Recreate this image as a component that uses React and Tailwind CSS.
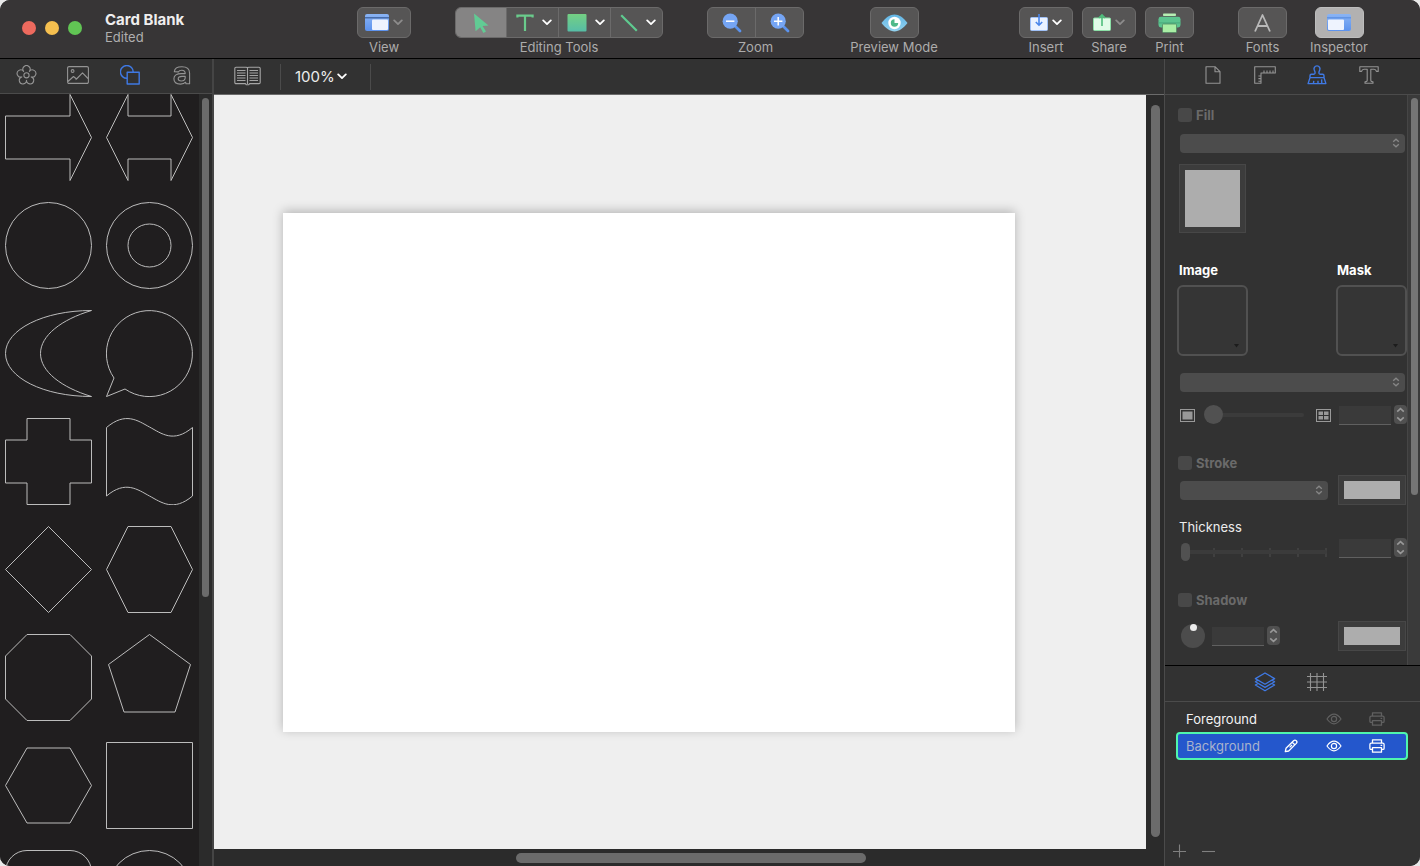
import { useState } from 'react';
import clsx from 'clsx';

const SHAPES = [
  { name: 'Arrow', d: 'M0 21.5H64.5V0L86 43 64.5 86V64.5H0Z' },
  { name: 'Double arrow', d: 'M0 43 21.5 0V21.5H64.5V0L86 43 64.5 86V64.5H21.5V86Z' },
  { name: 'Circle', d: 'M0 43a43 43 0 1 1 86 0a43 43 0 1 1-86 0Z' },
  { name: 'Ring', d: 'M0 43a43 43 0 1 1 86 0a43 43 0 1 1-86 0ZM21.5 43a21.5 21.5 0 1 1 43 0a21.5 21.5 0 1 1-43 0Z' },
  { name: 'Moon', d: 'M86 0C38 0 0 19 0 43S38 86 86 86C56 77 35 61 35 43S56 9 86 0Z' },
  { name: 'Speech bubble', d: 'M7.5 67.5A43 43 0 1 1 18.5 78.5L0 86Z' },
  { name: 'Cross', d: 'M21.5 0H64.5V21.5H86V64.5H64.5V86H21.5V64.5H0V21.5H21.5Z' },
  { name: 'Flag', d: 'M0 9C19-7 31 2 43 8.5S67 25 86 9V77.5C67 93.5 55 84 43 77.5S19 61.5 0 77.5Z' },
  { name: 'Diamond', d: 'M43 0 86 43 43 86 0 43Z' },
  { name: 'Tall hexagon', d: 'M21.5 0H64.5L86 43 64.5 86H21.5L0 43Z' },
  { name: 'Octagon', d: 'M21.5 0H64.5L86 21.5V64.5L64.5 86H21.5L0 64.5V21.5Z' },
  { name: 'Pentagon', d: 'M43 0 84 30 68.5 77.5H17.5L2 30Z' },
  { name: 'Hexagon', d: 'M21.5 5.5H64.5L86 43 64.5 80.5H21.5L0 43Z' },
  { name: 'Square', d: 'M0 0H86V86H0Z' },
  { name: 'Rounded square', d: 'M21.5 0H64.5A21.5 21.5 0 0 1 86 21.5V64.5A21.5 21.5 0 0 1 64.5 86H21.5A21.5 21.5 0 0 1 0 64.5V21.5A21.5 21.5 0 0 1 21.5 0Z' },
  { name: 'Oval', d: 'M0 43a43 43 0 1 1 86 0a43 43 0 1 1-86 0Z' },
];

/* ---------- small glyphs ---------- */

function Chevron({ className = 'text-white' }) {
  return (
    <svg width="10" height="7" viewBox="0 0 10 7" className={className} fill="none" stroke="currentColor" strokeWidth="1.8" strokeLinecap="round" strokeLinejoin="round">
      <path d="M1.2 1.4 5 5.1 8.8 1.4" />
    </svg>
  );
}

function WindowIcon({ flip }) {
  return (
    <svg width="24" height="17" viewBox="0 0 24 17">
      <defs>
        <linearGradient id="win" x1="0" y1="0" x2="0" y2="1">
          <stop offset="0" stopColor="#8ab4f4" />
          <stop offset="1" stopColor="#5c92ee" />
        </linearGradient>
      </defs>
      <rect width="24" height="17" rx="2" fill="url(#win)" />
      <rect y="3.2" width="24" height="1.2" fill={flip ? '#5b8fe0' : '#3a5c96'} />
      <rect x={flip ? 1 : 7} y="5.6" width="16" height="10.4" rx="1" fill="#eef3fe" />
    </svg>
  );
}

function ArrowCursorIcon() {
  return (
    <svg width="18" height="20" viewBox="0 0 18 20">
      <path d="M2 0.5 16.5 12.5 10.6 13 14 18.6 11.4 20 8.2 14.2 3.6 18.2Z" fill="#61cb94" />
    </svg>
  );
}

function TextToolIcon() {
  return (
    <svg width="18" height="18" viewBox="0 0 18 18" fill="none" stroke="#6acb8c" strokeWidth="2.2">
      <path d="M1.4 3.4V1.6H16.6V3.4M9 1.6V17" />
    </svg>
  );
}

function RectToolIcon() {
  return (
    <svg width="20" height="18" viewBox="0 0 20 18">
      <defs>
        <linearGradient id="rect" x1="0" y1="0" x2="0" y2="1">
          <stop offset="0" stopColor="#74d083" />
          <stop offset="1" stopColor="#56bda6" />
        </linearGradient>
      </defs>
      <rect x="0.5" width="19" height="17.5" rx="1" fill="url(#rect)" />
    </svg>
  );
}

function LineToolIcon() {
  return (
    <svg width="18" height="18" viewBox="0 0 18 18" fill="none" stroke="#5fcb90" strokeWidth="2.2">
      <path d="M1.2 1.2 16.8 16.8" />
    </svg>
  );
}

function ZoomIcon({ plus }) {
  return (
    <svg width="20" height="20" viewBox="0 0 20 20" fill="none">
      <path d="M13 13 18 18" stroke="#5b93ee" strokeWidth="2.8" strokeLinecap="round" />
      <circle cx="8.2" cy="8.2" r="7.6" fill="#75a5f4" />
      <path d={plus ? 'M4 8.2h8.4M8.2 4v8.4' : 'M4 8.2h8.4'} stroke="#fff" strokeWidth="1.5" />
    </svg>
  );
}

function PreviewIcon() {
  return (
    <svg width="27" height="18" viewBox="0 0 27 18">
      <defs>
        <linearGradient id="eye" x1="0" y1="0" x2="0" y2="1">
          <stop offset="0" stopColor="#62b6e6" />
          <stop offset="1" stopColor="#94d3f0" />
        </linearGradient>
      </defs>
      <path d="M0.5 9C5 3.4 9 0.6 13.5 0.6S22 3.4 26.5 9C22 14.6 18 17.4 13.5 17.4S5 14.6 0.5 9Z" fill="url(#eye)" />
      <circle cx="13.5" cy="9" r="6.2" fill="#fff" />
      <path d="M13.5 5.3V9H17.2A3.7 3.7 0 1 1 13.5 5.3Z" fill="#4fb98a" />
    </svg>
  );
}

function InsertIcon() {
  return (
    <svg width="18" height="17" viewBox="0 0 18 17" fill="none">
      <rect x="0.5" y="3.5" width="17" height="13" rx="1" fill="#eaf2ff" stroke="#9fc0f7" />
      <path d="M9 0V11M5.8 8 9 11.2 12.2 8" stroke="#4a86ea" strokeWidth="1.6" />
    </svg>
  );
}

function ShareIcon() {
  return (
    <svg width="18" height="17" viewBox="0 0 18 17" fill="none">
      <rect x="0.5" y="4" width="17" height="12.5" rx="1" fill="#e0fbe8" stroke="#8be0a6" />
      <path d="M9 1V12M5.8 4 9 0.9 12.2 4" stroke="#4fbd7c" strokeWidth="1.6" />
    </svg>
  );
}

function PrintIcon() {
  return (
    <svg width="23" height="20" viewBox="0 0 23 20">
      <rect x="5" y="0.5" width="13" height="2.6" rx="0.8" fill="#b6efb4" />
      <rect x="0.5" y="3.8" width="22" height="10.6" rx="2.4" fill="#5cc48f" />
      <rect x="0.5" y="9.4" width="22" height="1" fill="#4aa87c" />
      <rect x="4.5" y="11" width="14" height="8.6" rx="0.8" fill="#a9eea5" stroke="#4f8a63" strokeWidth="0.8" />
    </svg>
  );
}

function FontsIcon() {
  return (
    <svg width="17" height="18" viewBox="0 0 17 18" fill="none" stroke="#b9b9b9" strokeWidth="1.8">
      <path d="M1 17.5 8.5 1 16 17.5M3.6 12H13.4" strokeLinejoin="round" />
    </svg>
  );
}

function Line({ w = 20, h = 20, d, width = 1.1, children }) {
  return (
    <svg width={w} height={h} viewBox={`0 0 ${w} ${h}`} fill="none" stroke="currentColor" strokeWidth={width} strokeLinejoin="round">
      {d && <path d={d} />}
      {children}
    </svg>
  );
}

const FlowerIcon = () => (
  <Line w={21} h={20}>
    <circle cx="10.5" cy="10.3" r="2.6" />
    <path d="M7.6 6.3A3.6 3.6 0 1 1 13.4 6.3A3.6 3.6 0 1 1 15.2 11.9A3.6 3.6 0 1 1 10.5 15.3A3.6 3.6 0 1 1 5.8 11.9A3.6 3.6 0 1 1 7.6 6.3Z" />
  </Line>
);
const PictureIcon = () => (
  <Line w={22} h={18} d="M2 0.6H20A1.4 1.4 0 0 1 21.4 2V16A1.4 1.4 0 0 1 20 17.4H2A1.4 1.4 0 0 1 0.6 16V2A1.4 1.4 0 0 1 2 0.6ZM1 15.5 6.5 10.5 9.5 13 15.5 6.8 21 12.5M8.5 13.8 9.8 12.6">
    <circle cx="5.6" cy="5" r="1.4" />
  </Line>
);
const ShapesIcon = () => (
  <Line w={20} h={20} width={1.4} d="M7.2 7.2H19.2V19H7.2ZM7.2 13.3A6.4 6.4 0 1 1 13.2 7.2" />
);
const LetterIcon = () => (
  <Line w={18} h={19} d="M1.3 5.7C1.6 2.3 4.6 0.8 8.9 0.8C14 0.8 16.6 3 16.6 7.3V17.8H13L12.6 16.2C11.4 17.5 9.8 18.1 7.6 18.1C3.4 18.1 0.9 16.2 0.9 12.8C0.9 9.3 3.6 7.6 8.6 7.6H12.2C12.2 5.3 11.1 4.3 8.8 4.3C7 4.3 5.9 4.8 5.4 5.9ZM12.2 10.4H9C6.5 10.4 5.2 11.2 5.2 12.8C5.2 14.2 6.3 15 8.2 15C10.6 15 12.2 13.6 12.2 11.6Z" />
);
const BookIcon = () => (
  <Line w={27} h={20} d="M13.5 2V18M2 1.2H12Q13.5 1.2 13.5 2Q13.5 1.2 15 1.2H25A1.2 1.2 0 0 1 26.2 2.4V16.4A1.2 1.2 0 0 1 25 17.6H15.6L14.8 18.8H12.2L11.4 17.6H2A1.2 1.2 0 0 1 0.8 16.4V2.4A1.2 1.2 0 0 1 2 1.2ZM3 4.5H11.5M3 7H11.5M3 9.5H11.5M3 12H11.5M3 14.5H11.5M15.5 4.5H24M15.5 7H24M15.5 9.5H24M15.5 12H24M15.5 14.5H24" />
);
const PageIcon = () => <Line w={16} h={18} d="M1 0.7H10L15 5.7V17.3H1ZM10 0.7V5.7H15" />;
const RulerIcon = () => (
  <Line w={22} h={18} d="M0.7 0.7H21.3V7H7V17.3H0.7ZM10 7V4.4M13 7V4.4M16 7V4.4M19 7V4.4M7 10H4.4M7 12.6H4.4M7 15.2H4.4" />
);
const BrushIcon = () => (
  <Line w={20} h={20} width={1.4} d="M8 8.4C8.4 7.2 8 6.4 7.4 5.4A3 3 0 1 1 12.6 5.4C12 6.4 11.6 7.2 12 8.4Q12.2 9.2 13.4 9.2H15.6Q17 9.2 17 10.8V12.6H3V10.8Q3 9.2 4.4 9.2H6.6Q7.8 9.2 8 8.4ZM3 12.6 1.1 18.6H18.9L17 12.6M6.4 18.6 6.8 15.8M11 18.6V15.8M14.8 18.6 14.6 14.4" />
);
const BigTIcon = () => (
  <Line w={20} h={18} d="M0.8 0.7H19.2V5.4H17.4Q17 3.2 15 3.2H11.8V14.2Q11.8 15.8 14 15.8V17.3H6V15.8Q8.2 15.8 8.2 14.2V3.2H5Q3 3.2 2.6 5.4H0.8Z" />
);
const LayersIcon = () => (
  <Line w={22} h={20} width={1.3} d="M11 1 20.6 6.6 11 12.2 1.4 6.6ZM3.6 8.4 1.4 9.8 11 15.4 20.6 9.8 18.4 8.4M3.6 11.6 1.4 13 11 18.8 20.6 13 18.4 11.6" />
);
const GridIcon = () => <Line w={20} h={18} d="M3.5 0V18M10 0V18M16.5 0V18M0 3.5H20M0 9H20M0 14.5H20" />;
const PencilIcon = () => (
  <Line w={14} h={14} width={1.3} d="M1.3 12.7 2 9.3 9.6 1.7Q11 0.5 12.3 1.7T12.3 4.4L4.7 12ZM8.2 3.2 10.8 5.8M5.6 8.4 8 6" />
);
const EyeIcon = () => (
  <Line w={16} h={12} width={1.2} d="M1 6Q4.4 1.2 8 1.2T15 6Q11.6 10.8 8 10.8T1 6Z">
    <circle cx="8" cy="6" r="2.6" />
  </Line>
);
const PrinterIcon = () => (
  <Line w={16} h={14} width={1.3} d="M3.5 4.2V0.8H12.5V4.2M3.5 10.4H2Q0.9 10.4 0.9 9.2V5.6Q0.9 4.2 2.3 4.2H13.7Q15.1 4.2 15.1 5.6V9.2Q15.1 10.4 14 10.4H12.5M3.5 8.6H12.5V13.2H3.5ZM11.6 6.3H13.2" />
);

/* ---------- toolbar ---------- */

function ToolGroup({ label, className, children }) {
  return (
    <div className={clsx('flex shrink-0 flex-col items-center', className)}>
      {children}
      <span className="mt-px text-[13px] leading-4 whitespace-nowrap text-[#adacac]">{label}</span>
    </div>
  );
}

function ToolButton({ label, active, wide, children }) {
  return (
    <button
      type="button"
      aria-label={label}
      className={clsx(
        'flex h-[31px] items-center justify-center gap-1 rounded-md border',
        wide ? 'w-[54px]' : 'w-[49px]',
        active ? 'border-[#bdbdbd] bg-[#b2b1b1]' : 'border-[#6b6a6a] bg-[#565555]',
      )}
    >
      {children}
    </button>
  );
}

function Toolbar() {
  const [tool, setTool] = useState('Select');
  const tools = [
    { name: 'Select', icon: <ArrowCursorIcon /> },
    { name: 'Text', icon: <TextToolIcon />, menu: true },
    { name: 'Rectangle', icon: <RectToolIcon />, menu: true },
    { name: 'Line', icon: <LineToolIcon />, menu: true },
  ];

  return (
    <header className="flex h-[59px] shrink-0 items-start border-b border-black bg-[#373536] pt-[7px] pr-[52px]">
      <div className="flex min-w-0 flex-1 items-start">
        <div className="mt-[14px] ml-[22px] flex gap-[9px]">
          <button type="button" aria-label="Close" className="size-[14px] rounded-full bg-[#ed6a5e]" />
          <button type="button" aria-label="Minimize" className="size-[14px] rounded-full bg-[#f5bf4f]" />
          <button type="button" aria-label="Full screen" className="size-[14px] rounded-full bg-[#61c554]" />
        </div>
        <div className="mt-1 ml-[23px] whitespace-nowrap">
          <h1 className="text-[15px] leading-[18px] font-bold text-[#efeeee]">Card Blank</h1>
          <p className="text-[13px] leading-4 text-[#b0afaf]">Edited</p>
        </div>
      </div>

      <ToolGroup label="View">
        <ToolButton label="View" wide><WindowIcon /><Chevron className="text-[#8d8c8c]" /></ToolButton>
      </ToolGroup>

      <ToolGroup label="Editing Tools" className="ml-11">
        <div className="flex h-[31px] overflow-hidden rounded-md border border-[#6b6a6a] bg-[#565555]">
          {tools.map(({ name, icon, menu }, i) => (
            <button
              key={name}
              type="button"
              aria-label={name}
              onClick={() => setTool(name)}
              className={clsx(
                'flex items-center justify-center',
                i === 0 ? 'w-[50px]' : 'w-[52px] border-l border-[#6b6a6a]',
                menu && 'gap-2 pl-0.5',
                tool === name && 'bg-[#858484]',
              )}
            >
              {icon}
              {menu && <Chevron />}
            </button>
          ))}
        </div>
      </ToolGroup>

      <ToolGroup label="Zoom" className="ml-11">
        <div className="flex h-[31px] rounded-md border border-[#6b6a6a] bg-[#565555]">
          <button type="button" aria-label="Zoom out" className="flex w-[47px] items-center justify-center"><ZoomIcon /></button>
          <button type="button" aria-label="Zoom in" className="flex w-12 items-center justify-center border-l border-[#6b6a6a]"><ZoomIcon plus /></button>
        </div>
      </ToolGroup>

      <ToolGroup label="Preview Mode" className="ml-[47px] w-[86px]">
        <ToolButton label="Preview Mode"><PreviewIcon /></ToolButton>
      </ToolGroup>

      <ToolGroup label="Insert" className="ml-[82px]">
        <ToolButton label="Insert" wide>
          <InsertIcon /><Chevron />
        </ToolButton>
      </ToolGroup>
      <ToolGroup label="Share" className="ml-[9px]">
        <ToolButton label="Share" wide>
          <ShareIcon /><Chevron className="text-[#8d8c8c]" />
        </ToolButton>
      </ToolGroup>
      <ToolGroup label="Print" className="ml-[9px]">
        <ToolButton label="Print"><PrintIcon /></ToolButton>
      </ToolGroup>
      <ToolGroup label="Fonts" className="ml-11">
        <ToolButton label="Fonts"><FontsIcon /></ToolButton>
      </ToolGroup>
      <ToolGroup label="Inspector" className="ml-[23px] w-[58px]">
        <ToolButton label="Inspector" active><WindowIcon flip /></ToolButton>
      </ToolGroup>
    </header>
  );
}

function IconTabs({ tabs, initial, className, itemClass }) {
  const [current, setCurrent] = useState(initial);
  return (
    <div className={clsx('flex shrink-0 items-start border-b border-[#4b4b4b] bg-[#323232]', className)}>
      {tabs.map(({ name, Icon }) => (
        <button
          key={name}
          type="button"
          aria-label={name}
          onClick={() => setCurrent(name)}
          className={clsx('flex h-8 items-center justify-center', itemClass, current === name ? 'text-[#3f79e4]' : 'text-[#949494]')}
        >
          <Icon />
        </button>
      ))}
    </div>
  );
}

/* ---------- left sidebar ---------- */

function ShapeLibrary() {
  return (
    <aside className="flex w-[214px] shrink-0 flex-col border-r-2 border-[#454545]">
      <IconTabs
        className="h-[35px]"
        itemClass="w-[52px]"
        initial="Shapes"
        tabs={[
          { name: 'Clip art', Icon: FlowerIcon },
          { name: 'Pictures', Icon: PictureIcon },
          { name: 'Shapes', Icon: ShapesIcon },
          { name: 'Text art', Icon: LetterIcon },
        ]}
      />
      <div className="flex min-h-0 flex-1">
        <div className="grid flex-1 auto-rows-[87px] grid-cols-[87px_87px] gap-x-[14px] gap-y-[21px] overflow-hidden bg-[#201e1f] pl-[5px]">
          {SHAPES.map(({ name, d }) => (
            <button key={name} type="button" aria-label={name}>
              <svg width="87" height="87" viewBox="-0.5 -0.5 87 87" fill="none" stroke="#bcbcbc">
                <path d={d} />
              </svg>
            </button>
          ))}
        </div>
        <div className="flex w-[13px] justify-center bg-[#2b2b2b] pt-1">
          <div className="h-[65%] w-[7px] rounded-full bg-[#6b6b6b]" />
        </div>
      </div>
    </aside>
  );
}

/* ---------- canvas ---------- */

function Canvas() {
  return (
    <main className="flex min-w-0 flex-1 flex-col">
      <div className="flex h-9 shrink-0 items-center border-b border-[#6b6b6b] bg-[#323232] pl-5">
        <button type="button" aria-label="Facing pages" className="mb-0.5 text-[#a5a5a5]"><BookIcon /></button>
        <span className="ml-[19px] h-[26px] w-px bg-[#4b4b4b]" />
        <button type="button" className="ml-[14px] flex w-[75px] items-center gap-0.5 text-[15px] leading-5 text-[#ececec]">
          100% <Chevron />
        </button>
        <span className="h-[26px] w-px bg-[#4b4b4b]" />
      </div>
      <div className="flex min-h-0 flex-1">
        <div className="flex min-w-0 flex-1 items-center overflow-hidden bg-[#efefef] pl-[69px]">
          <div className="h-[519px] w-[732px] shrink-0 bg-white shadow-[0_-2px_10px_rgba(0,0,0,0.25)]" />
        </div>
        <div className="flex w-[18px] justify-center bg-[#2b2b2b] pt-[10px]">
          <div className="h-[98.4%] w-[9px] rounded-full bg-[#6b6b6b]" />
        </div>
      </div>
      <div className="flex h-[17px] shrink-0 items-center bg-[#2b2b2b] pl-[302px]">
        <div className="h-[10px] w-[54%] rounded-full bg-[#6b6b6b]" />
      </div>
    </main>
  );
}

/* ---------- inspector ---------- */

function CheckRow({ id, label, className }) {
  return (
    <div className={clsx('flex h-4 items-center gap-1 pl-px', className)}>
      <input id={id} type="checkbox" disabled className="size-[14px] appearance-none rounded-[3px] bg-[#484848]" />
      <label htmlFor={id} className="text-[13px] leading-4 font-bold text-[#6a6a6a]">{label}</label>
    </div>
  );
}

function PopUp({ label, className }) {
  return (
    <div className={clsx('relative h-[19px]', className)}>
      <select aria-label={label} disabled className="block h-full w-full appearance-none rounded bg-[#4c4c4c]" />
      <svg width="8" height="10" viewBox="0 0 8 10" fill="none" stroke="#868686" strokeWidth="1.3" className="pointer-events-none absolute top-1 right-[5px]">
        <path d="M1.2 3.8 4 1.2 6.8 3.8M1.2 6.2 4 8.8 6.8 6.2" />
      </svg>
    </div>
  );
}

function ColorWell({ label, className }) {
  return (
    <button type="button" aria-label={label} className={clsx('border border-[#474747] bg-[#3c3c3c] p-[5px]', className)}>
      <span className="block h-full w-full bg-[#adadad]" />
    </button>
  );
}

function ImageWell({ label }) {
  return (
    <button type="button" aria-label={label} className="flex size-[71px] items-end justify-end rounded-md border-2 border-[#515151] bg-[#353535] p-[6px]">
      <svg width="7" height="4" viewBox="0 0 7 4" fill="#1c1c1c"><path d="M1 0H6L3.5 3.4Z" /></svg>
    </button>
  );
}

function NumberField({ label, className }) {
  return (
    <div className={clsx('flex items-start gap-[3px]', className)}>
      <input type="text" aria-label={label} disabled className="mt-px h-[19px] w-[52px] border-b border-[#606060] bg-[#3a3a3a]" />
      <div className="flex h-[19px] w-[13px] flex-col overflow-hidden rounded bg-[#505050] text-[#999]">
        <button type="button" aria-label={`Increase ${label}`} className="flex flex-1 items-center justify-center">
          <svg width="9" height="6" viewBox="0 0 9 6" fill="none" stroke="currentColor" strokeWidth="1.6"><path d="M1.2 4.6 4.5 1.6 7.8 4.6" /></svg>
        </button>
        <button type="button" aria-label={`Decrease ${label}`} className="flex flex-1 items-center justify-center">
          <svg width="9" height="6" viewBox="0 0 9 6" fill="none" stroke="currentColor" strokeWidth="1.6"><path d="M1.2 1.4 4.5 4.4 7.8 1.4" /></svg>
        </button>
      </div>
    </div>
  );
}

function StyleInspector() {
  return (
    <div className="min-w-0 flex-1 overflow-hidden pt-3 pl-3">
      <CheckRow id="fill" label="Fill" />
      <PopUp label="Fill type" className="mt-[11px] mr-[2px] ml-[3px]" />
      <ColorWell label="Fill color" className="mt-[11px] ml-[2px] block h-[69px] w-[67px]" />

      <div className="mt-[29px] flex justify-between">
        <div>
          <p className="mb-[7px] pl-[2px] text-[13px] leading-4 font-bold text-white">Image</p>
          <ImageWell label="Image" />
        </div>
        <div>
          <p className="mb-[7px] pl-px text-[13px] leading-4 font-bold text-white">Mask</p>
          <ImageWell label="Mask" />
        </div>
      </div>
      <PopUp label="Image layout" className="mt-[17px] mr-[2px] ml-[3px]" />

      <div className="mt-3 flex h-[22px] items-center pl-[3px]">
        <svg width="15" height="13" viewBox="0 0 15 13" fill="none">
          <rect x="0.5" y="0.5" width="14" height="12" stroke="#999" />
          <rect x="2.5" y="2.5" width="10" height="8" fill="#999" />
        </svg>
        <input
          type="range"
          aria-label="Tile size"
          defaultValue="0"
          disabled
          className="mx-[9px] h-5 min-w-0 flex-1 appearance-none bg-transparent [&::-webkit-slider-runnable-track]:h-1 [&::-webkit-slider-runnable-track]:rounded-full [&::-webkit-slider-runnable-track]:bg-[#3b3b3b] [&::-webkit-slider-thumb]:-mt-2 [&::-webkit-slider-thumb]:size-[19px] [&::-webkit-slider-thumb]:appearance-none [&::-webkit-slider-thumb]:rounded-full [&::-webkit-slider-thumb]:bg-[#515151]"
        />
        <svg width="15" height="13" viewBox="0 0 15 13" fill="none" className="ml-[3px]">
          <rect x="0.5" y="0.5" width="14" height="12" stroke="#999" />
          <path d="M2.5 2.5H7V6H2.5ZM8 2.5H12.5V6H8ZM2.5 7H7V10.5H2.5ZM8 7H12.5V10.5H8Z" fill="#999" />
        </svg>
        <NumberField label="tile size" className="ml-2" />
      </div>

      <CheckRow id="stroke" label="Stroke" className="mt-[29px]" />
      <div className="mt-1 flex h-[30px] items-center gap-[10px] pr-px pl-[3px]">
        <PopUp label="Stroke style" className="flex-1" />
        <ColorWell label="Stroke color" className="h-[30px] w-[68px]" />
      </div>
      <label htmlFor="thickness" className="mt-[14px] block pl-[2px] text-[13px] leading-4 text-[#ececec]">Thickness</label>
      <div className="mt-[3px] flex h-7 items-center pl-1">
        <div className="relative flex flex-1 items-center">
          <div className="absolute inset-x-0 flex justify-between pl-1">
            {[0, 1, 2, 3, 4, 5].map((n) => <span key={n} className="h-[9px] w-0.5 bg-[#404040]" />)}
          </div>
          <input
            id="thickness"
            type="range"
            defaultValue="0"
            disabled
            className="relative h-5 w-full appearance-none bg-transparent [&::-webkit-slider-runnable-track]:h-1 [&::-webkit-slider-runnable-track]:rounded-full [&::-webkit-slider-runnable-track]:bg-[#3b3b3b] [&::-webkit-slider-thumb]:-mt-[7px] [&::-webkit-slider-thumb]:h-[18px] [&::-webkit-slider-thumb]:w-[9px] [&::-webkit-slider-thumb]:appearance-none [&::-webkit-slider-thumb]:rounded-full [&::-webkit-slider-thumb]:bg-[#515151]"
          />
        </div>
        <NumberField label="thickness" className="ml-3 self-start" />
      </div>

      <CheckRow id="shadow" label="Shadow" className="mt-[26px]" />
      <div className="mt-3 flex h-8 items-center pr-px pl-1">
        <button type="button" aria-label="Shadow angle" className="flex size-6 justify-center rounded-full bg-[#4c4c4c]">
          <span className="size-[7px] rounded-full bg-[#ececec]" />
        </button>
        <NumberField label="shadow angle" className="ml-[7px]" />
        <ColorWell label="Shadow color" className="ml-auto h-[30px] w-[68px]" />
      </div>
    </div>
  );
}

function LayerList() {
  const [selected, setSelected] = useState('Background');
  return (
    <ul className="mt-1 mr-3 ml-[11px]">
      {['Foreground', 'Background'].map((name) => {
        const active = name === selected;
        return (
          <li
            key={name}
            onClick={() => setSelected(name)}
            className={clsx(
              'flex items-center rounded border-2 pl-2',
              active ? 'h-7 border-[#4ff5ae] bg-[#2457cc] text-white' : 'h-[26px] border-transparent text-[#606060]',
            )}
          >
            <span className={clsx('flex-1 text-[13px] leading-4', active ? 'text-[#a9b3cc]' : 'text-[#f2f2f2]')}>{name}</span>
            {active && <PencilIcon />}
            <button type="button" aria-label={`Show ${name}`} className="ml-7 flex w-4 justify-center"><EyeIcon /></button>
            <button type="button" aria-label={`Print ${name}`} className="mr-[21px] ml-[27px] flex w-4 justify-center"><PrinterIcon /></button>
          </li>
        );
      })}
    </ul>
  );
}

function Inspector() {
  return (
    <aside className="flex w-[256px] shrink-0 flex-col border-l border-[#4b4b4b] bg-[#323232]">
      <IconTabs
        className="h-9 justify-center pr-1"
        itemClass="w-[52px]"
        initial="Style"
        tabs={[
          { name: 'Document', Icon: PageIcon },
          { name: 'Geometry', Icon: RulerIcon },
          { name: 'Style', Icon: BrushIcon },
          { name: 'Text', Icon: BigTIcon },
        ]}
      />
      <div className="flex min-h-0 flex-1">
        <StyleInspector />
        <div className="flex w-[13px] justify-center border-l border-[#464646] bg-[#3a3a3a] pt-[3px]">
          <div className="h-[70%] w-[7px] rounded-full bg-[#757575]" />
        </div>
      </div>
      <section className="flex h-[201px] shrink-0 flex-col border-t border-black">
        <IconTabs
          className="h-9 justify-center pr-1"
          itemClass="w-[52px]"
          initial="Layers"
          tabs={[
            { name: 'Layers', Icon: LayersIcon },
            { name: 'Grid', Icon: GridIcon },
          ]}
        />
        <LayerList />
        <div className="mt-auto mb-2 ml-2 flex gap-4 text-[#808080]">
          <button type="button" aria-label="Add layer"><Line w={13} h={14} d="M6.5 0.5V13.5M0 7.5H13" /></button>
          <button type="button" aria-label="Remove layer"><Line w={13} h={14} d="M0 7.5H13" /></button>
        </div>
      </section>
    </aside>
  );
}

export default function App() {
  return (
    <div className="h-screen bg-[#e9e9e9] font-[Inter,'Liberation_Sans',sans-serif]">
      <div className="flex h-full flex-col overflow-hidden rounded-[10px] bg-[#2b2b2b]">
        <Toolbar />
        <div className="flex min-h-0 flex-1">
          <ShapeLibrary />
          <Canvas />
          <Inspector />
        </div>
      </div>
    </div>
  );
}
